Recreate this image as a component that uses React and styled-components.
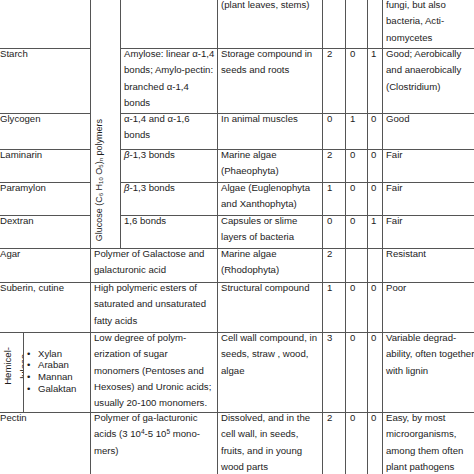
import React from "react"
import styled, { createGlobalStyle } from "styled-components"

const GlobalStyle = createGlobalStyle`
  html, body {
    margin: 0;
    padding: 0;
    background: #fff;
    overflow: hidden;
  }
  body {
    font-family: "Liberation Sans", Arial, sans-serif;
  }
`

const Page = styled.div`
  width: 474px;
  height: 474px;
  overflow: hidden;
  background: #fff;
`

// 1px grid gap on a grey background draws the ruling lines
const Table = styled.div`
  display: grid;
  grid-template-columns: 26px 66px 29px 96px 104px 22px 21px 14px 110px;
  grid-template-rows: 48px 64px 35px 32px 32px 32px 33px 49px 79px 80px;
  gap: 1px;
  padding: 1px;
  width: max-content;
  margin: -1px 0 0 -4px;
  background: #555;
  color: #1c1c1c;
  font-size: 9.6px;
  line-height: 16.3px;
`

const Cell = styled.div`
  grid-column: ${(p) => p.$col};
  grid-row: ${(p) => p.$row};
  background: #fff;
  padding: 0 ${(p) => p.$pad ?? 3}px;
  overflow: hidden;
  white-space: nowrap;
`

const Text = styled.div`
  margin-top: -3px;
`

const SideCell = styled(Cell)`
  display: flex;
  align-items: ${(p) => (p.$center ? "center" : "flex-end")};
  padding: 0 0 ${(p) => p.$bottom}px ${(p) => p.$left}px;
`

const Vertical = styled.span`
  writing-mode: vertical-rl;
  transform: rotate(180deg);
  text-align: center;
  white-space: nowrap;
  font-size: ${(p) => p.$size || 9.6}px;
`

const Sub = styled.sub`
  font-size: 6px;
  line-height: 0;
  vertical-align: -1.5px;
`

const Sup = styled.sup`
  font-size: 6.5px;
  line-height: 0;
  vertical-align: 3.5px;
`

const ListCell = styled(Cell)`
  display: flex;
  flex-direction: column;
  justify-content: center;
  padding-bottom: 3px;
  line-height: 11.7px;
`

const Item = styled.div`
  display: flex;
`

const Dot = styled.span`
  width: 11px;
  flex: none;
`

const a = "α"
const b = <i>β</i>

const rows = [
  {
    occ: ["(plant leaves, stems)"],
    nums: ["", "", ""],
    deg: ["fungi, but also", "bacteria, Acti-", "nomycetes"],
  },
  {
    name: ["Starch"],
    bonds: [`Amylose: linear ${a}-1,4`, "bonds; Amylo-pectin:", `branched ${a}-1,4`, "bonds"],
    occ: ["Storage compound in", "seeds and roots"],
    nums: ["2", "0", "1"],
    deg: ["Good; Aerobically", "and anaerobically", "(Clostridium)"],
  },
  {
    name: ["Glycogen"],
    bonds: [`${a}-1,4 and ${a}-1,6`, "bonds"],
    occ: ["In animal muscles"],
    nums: ["0", "1", "0"],
    deg: ["Good"],
  },
  {
    name: ["Laminarin"],
    bonds: [<>{b}-1,3 bonds</>],
    occ: ["Marine algae", "(Phaeophyta)"],
    nums: ["2", "0", "0"],
    deg: ["Fair"],
  },
  {
    name: ["Paramylon"],
    bonds: [<>{b}-1,3 bonds</>],
    occ: ["Algae (Euglenophyta", "and Xanthophyta)"],
    nums: ["1", "0", "0"],
    deg: ["Fair"],
  },
  {
    name: ["Dextran"],
    bonds: ["1,6 bonds"],
    occ: ["Capsules or slime", "layers of bacteria"],
    nums: ["0", "0", "1"],
    deg: ["Fair"],
  },
  {
    name: ["Agar"],
    wide: true,
    bonds: ["Polymer of Galactose and", "galacturonic acid"],
    occ: ["Marine algae", "(Rhodophyta)"],
    nums: ["2", "", ""],
    deg: ["Resistant"],
  },
  {
    name: ["Suberin, cutine"],
    wide: true,
    bonds: ["High polymeric esters of", "saturated and unsaturated", "fatty acids"],
    occ: ["Structural compound"],
    nums: ["1", "0", "0"],
    deg: ["Poor"],
  },
  {
    hemi: true,
    wide: true,
    bonds: [
      "Low degree of polym-",
      "erization of sugar",
      "monomers (Pentoses and",
      "Hexoses) and Uronic acids;",
      "usually 20-100 monomers.",
    ],
    occ: ["Cell wall compound, in", "seeds, straw , wood,", "algae"],
    nums: ["3", "0", "0"],
    deg: ["Variable degrad-", "ability, often together", "with lignin"],
  },
  {
    name: ["Pectin"],
    wide: true,
    bonds: [
      "Polymer of ga-lacturonic",
      <>acids (3 10<Sup>4</Sup>-5 10<Sup>5</Sup> mono-</>,
      "mers)",
    ],
    occ: ["Dissolved, and in the", "cell wall, in seeds,", "fruits, and in young", "wood parts"],
    nums: ["2", "0", "0"],
    deg: ["Easy, by most", "microorganisms,", "among them often", "plant pathogens"],
  },
]

const Lines = ({ lines }) => (
  <Text>
    {(lines || []).map((l, i) => (
      <div key={i}>{l}</div>
    ))}
  </Text>
)

const numCols = [6, 7, 8]
const numPad = [4, 4, 3]

const App = () => {
  return (
    <>
      <GlobalStyle />
      <Page>
        <Table>
          <SideCell $col="3" $row="1 / 7" $left={0} $bottom={7}>
            <Vertical $size={9}>
              Glucose (C<Sub>6</Sub> H<Sub>10</Sub> O<Sub>5</Sub>)<Sub>n</Sub> polymers
            </Vertical>
          </SideCell>

          {rows.map((r, i) => {
            const row = i + 1
            return (
              <React.Fragment key={i}>
                {r.hemi ? (
                  <>
                    <SideCell $col="1" $row={row} $left={3} $bottom={14} $center>
                      <Vertical>
                        Hemicel-
                        <br />
                        lulose
                      </Vertical>
                    </SideCell>
                    <ListCell $col="2" $row={row}>
                      {["Xylan", "Araban", "Mannan", "Galaktan"].map((t) => (
                        <Item key={t}>
                          <Dot>•</Dot>
                          {t}
                        </Item>
                      ))}
                    </ListCell>
                  </>
                ) : (
                  <Cell $col="1 / 3" $row={row}>
                    <Lines lines={r.name} />
                  </Cell>
                )}
                <Cell $col={r.wide ? "3 / 5" : "4"} $row={row}>
                  <Lines lines={r.bonds} />
                </Cell>
                <Cell $col="5" $row={row}>
                  <Lines lines={r.occ} />
                </Cell>
                {r.nums.map((n, j) => (
                  <Cell key={j} $col={numCols[j]} $row={row} $pad={numPad[j]}>
                    <Lines lines={n ? [n] : []} />
                  </Cell>
                ))}
                <Cell $col="9" $row={row}>
                  <Lines lines={r.deg} />
                </Cell>
              </React.Fragment>
            )
          })}
        </Table>
      </Page>
    </>
  )
}

export default App
